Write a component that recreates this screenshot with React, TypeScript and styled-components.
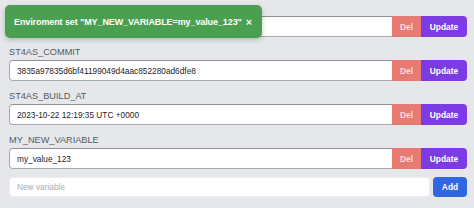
import React, { useState } from "react";
import styled, { createGlobalStyle } from "styled-components";

const GlobalStyle = createGlobalStyle`
  html, body {
    margin: 0;
    padding: 0;
    background: #e6e7eb;
  }
  body {
    font-family: "Liberation Sans", Arial, sans-serif;
  }
`;

const Page = styled.div`
  position: relative;
  width: 474px;
  height: 208px;
  box-sizing: border-box;
  padding: 1px 7px 0 9px;
  background: #e6e7eb;
  overflow: hidden;
`;

const Group = styled.div`
  display: flex;
  flex-direction: column;
  margin-bottom: 8px;
`;

const Label = styled.div<{ $covered?: boolean }>`
  height: 15px;
  line-height: 15px;
  font-size: 9.2px;
  color: #565b61;
  visibility: ${(p) => (p.$covered ? "hidden" : "visible")};
`;

const Row = styled.div`
  display: flex;
  align-items: stretch;
  height: 21px;
`;

const Input = styled.input<{ $plain?: boolean }>`
  flex: 1;
  min-width: 0;
  box-sizing: border-box;
  height: 100%;
  padding: 0 7px;
  font-family: inherit;
  font-size: 8.3px;
  color: #1f2226;
  background: #fff;
  border: 1px solid ${(p) => (p.$plain ? "#eceef1" : "#a7a9ac")};
  border-top-color: ${(p) => (p.$plain ? "#eceef1" : "#8f9194")};
  border-right: ${(p) => (p.$plain ? undefined : "none")};
  border-radius: ${(p) => (p.$plain ? "4px" : "4px 0 0 4px")};
  outline: none;
  &::placeholder {
    color: #a9adb4;
  }
`;

const Button = styled.button<{ $color: string; $width: number; $last?: boolean; $alone?: boolean }>`
  width: ${(p) => p.$width}px;
  flex: none;
  border: none;
  padding: 0;
  font-family: inherit;
  font-size: 8.4px;
  font-weight: 700;
  color: #fff;
  background: ${(p) => p.$color};
  border-radius: ${(p) => (p.$alone ? "4px" : p.$last ? "0 4px 4px 0" : "0")};
  margin-left: ${(p) => (p.$alone ? "3px" : "0")};
  cursor: pointer;
`;

const DelButton = styled(Button)`
  color: #f9dcda;
`;

const AddRow = styled(Row)`
  margin-top: 5px;
  height: 20px;
`;

const Toast = styled.div`
  position: absolute;
  top: 5px;
  left: 5px;
  width: 257px;
  height: 33px;
  box-sizing: border-box;
  display: flex;
  align-items: center;
  justify-content: space-between;
  padding: 0 10px 0 9px;
  background: #4b9f50;
  border-radius: 5px;
  box-shadow: 0 2px 5px rgba(0, 0, 0, 0.22);
  color: #fff;
  font-size: 9px;
  letter-spacing: -0.1px;
  font-weight: 700;
  white-space: nowrap;
`;

const Close = styled.span`
  font-size: 11px;
  font-weight: 700;
  opacity: 0.9;
`;

type Variable = { name: string; value: string };

const initial: Variable[] = [
  { name: "ST4AS_VERSION", value: "" },
  { name: "ST4AS_COMMIT", value: "3835a97835d6bf41199049d4aac852280ad6dfe8" },
  { name: "ST4AS_BUILD_AT", value: "2023-10-22 12:19:35 UTC +0000" },
  { name: "MY_NEW_VARIABLE", value: "my_value_123" },
];

export default function App() {
  const [vars, setVars] = useState(initial);
  const [draft, setDraft] = useState("");

  const change = (i: number, value: string) =>
    setVars(vars.map((v, j) => (j === i ? { ...v, value } : v)));

  return (
    <>
      <GlobalStyle />
      <Page>
        {vars.map((v, i) => (
          <Group key={v.name}>
            {/* the first label sits under the toast */}
            <Label $covered={i === 0}>{v.name}</Label>
            <Row>
              <Input value={v.value} onChange={(e) => change(i, e.target.value)} />
              <DelButton $color="#e77a73" $width={29}>
                Del
              </DelButton>
              <Button $color="#7d3be3" $width={46} $last>
                Update
              </Button>
            </Row>
          </Group>
        ))}
        <AddRow>
          <Input
            $plain
            placeholder="New variable"
            value={draft}
            onChange={(e) => setDraft(e.target.value)}
          />
          <Button $color="#2f67e0" $width={34} $alone>
            Add
          </Button>
        </AddRow>
        <Toast>
          <span>Enviroment set "MY_NEW_VARIABLE=my_value_123"</span>
          <Close>×</Close>
        </Toast>
      </Page>
    </>
  );
}
